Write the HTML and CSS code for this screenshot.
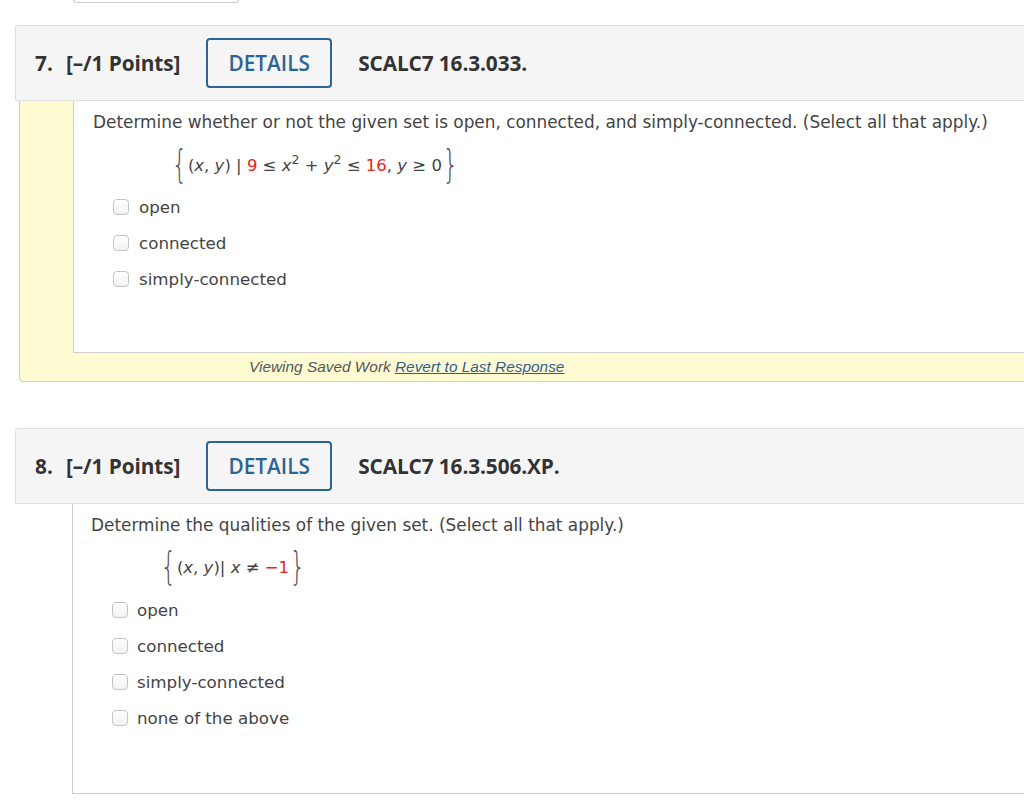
FILE: index.html
```html
<!DOCTYPE html>
<html>
<head>
<meta charset="utf-8">
<link rel="stylesheet" href="styles.css">
</head>
<body>
<div class="topbox"></div>

<div class="question q7">
  <div class="qhead">
    <span class="qn">7.</span><span class="pts">[–/1 Points]</span>
    <span class="details">DETAILS</span>
    <span class="qcode">SCALC7 16.3.033.</span>
  </div>
  <div class="saved">
    <div class="panel panel7">
      <div class="prompt">Determine whether or not the given set is open, connected, and simply-connected. (Select all that apply.)</div>
      <div class="math math7"><span class="brace bl">{</span><span class="mexpr">(<i>x</i>, <i>y</i>) | <span class="red">9</span> ≤ <i>x</i><sup>2</sup> + <i>y</i><sup>2</sup> ≤ <span class="red">16</span>, <i>y</i> ≥ 0</span><span class="brace br">}</span></div>
      <ul class="opts">
        <li><span class="cb"></span><span>open</span></li>
        <li><span class="cb"></span><span>connected</span></li>
        <li><span class="cb"></span><span>simply-connected</span></li>
      </ul>
    </div>
    <div class="savedfoot"><span class="vsw">Viewing Saved Work </span><a class="revert">Revert to Last Response</a></div>
  </div>
</div>

<div class="question q8">
  <div class="qhead">
    <span class="qn">8.</span><span class="pts">[–/1 Points]</span>
    <span class="details">DETAILS</span>
    <span class="qcode">SCALC7 16.3.506.XP.</span>
  </div>
  <div class="panel panel8">
    <div class="prompt">Determine the qualities of the given set. (Select all that apply.)</div>
    <div class="math math8"><span class="brace bl">{</span><span class="mexpr">(<i>x</i>, <i>y</i>)| <i>x</i> ≠ <span class="red">−1</span></span><span class="brace br">}</span></div>
    <ul class="opts">
      <li><span class="cb"></span><span>open</span></li>
      <li><span class="cb"></span><span>connected</span></li>
      <li><span class="cb"></span><span>simply-connected</span></li>
      <li><span class="cb"></span><span>none of the above</span></li>
    </ul>
  </div>
</div>
</body>
</html>
```
FILE: styles.css
```css
html, body {
  margin: 0;
  padding: 0;
  background: #ffffff;
  overflow: hidden;
}
body {
  font-family: "DejaVu Sans", Verdana, sans-serif;
  color: #444;
}
.topbox {
  margin-left: 73px;
  width: 164px;
  height: 2px;
  border: 1px solid #d0d0d0;
  border-top: none;
  border-radius: 0 0 4px 4px;
}
.question {
  margin-left: 15px;
}
.q7 { margin-top: 22px; }
.q8 { margin-top: 46px; }
.qhead {
  height: 74px;
  display: flex;
  align-items: center;
  background: #f5f5f5;
  border: 1px solid #dedede;
  border-right: none;
  border-radius: 3px 0 0 0;
  padding-left: 19px;
  font-family: "Open Sans", sans-serif;
  font-weight: 700;
  font-size: 20.8px;
  color: #333;
}
.qn { width: 31px; }
.pts { letter-spacing: -0.1px; }
.details {
  margin-left: 26px;
  box-sizing: border-box;
  width: 126px;
  height: 50px;
  border: 2px solid #2d6496;
  border-radius: 4px;
  color: #2d6496;
  font-weight: 600;
  display: flex;
  align-items: center;
  justify-content: center;
}
.qcode { margin-left: 26px; letter-spacing: -0.1px; }
.saved {
  margin-left: 4px;
  background: #fffcd4;
  border-left: 1px solid #cfcfcf;
  border-bottom: 1px solid #cfcfcf;
  border-radius: 0 0 0 4px;
}
.panel {
  background: #fff;
  border-left: 1px solid #cfcfcf;
  border-bottom: 1px solid #cfcfcf;
  box-sizing: border-box;
  font-size: 16.7px;
  color: #444;
}
.panel7 {
  margin-left: 53px;
  height: 252px;
  padding: 11px 0 0 19px;
}
.panel8 {
  margin-left: 57px;
  height: 290px;
  padding: 11px 0 0 18px;
}
.prompt {
  line-height: 20px;
  white-space: nowrap;
  font-size: 16.9px;
}
.math {
  display: flex;
  align-items: center;
  height: 34px;
  font-size: 16.5px;
}
.math7 { margin-top: 16px; padding-left: 75px; }
.math8 { margin-top: 15px; padding-left: 66px; }
.brace {
  font-family: "DejaVu Sans", sans-serif;
  font-size: 36px;
  font-weight: 200;
  line-height: 34px;
  color: #555;
  transform: scale(0.68, 1.1);
}
.bl { margin-right: -3px; }
.br { margin-left: -3px; }
.mexpr i { font-style: italic; }
.mexpr sup { font-size: 12.5px; vertical-align: 7px; line-height: 0; }
.red { color: #e8221c; }
.opts {
  list-style: none;
  margin: 7px 0 0 0;
  padding: 0 0 0 20px;
}
.panel8 .opts { margin-top: 8px; padding-left: 21px; }
.opts li {
  height: 36px;
  display: flex;
  align-items: center;
  gap: 10px;
}
.panel8 .opts li { gap: 9px; }
.cb {
  width: 16px;
  height: 16px;
  box-sizing: border-box;
  border: 1px solid #c4c4c4;
  border-radius: 4px;
  background: linear-gradient(#ffffff, #f2f2f2);
  flex: none;
}
.savedfoot {
  height: 28px;
  display: flex;
  align-items: center;
  padding-left: 229px;
  font-family: "Liberation Sans", Arial, sans-serif;
  font-style: italic;
  font-size: 15.4px;
  color: #555;
  white-space: pre;
}
.revert {
  color: #2f5f8f;
  text-decoration: underline;
}
```
